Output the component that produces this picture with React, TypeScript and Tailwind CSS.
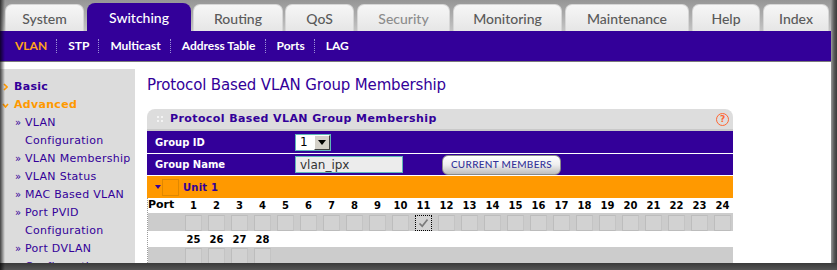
import React from 'react';

const tabs: { label: string; cls: string; active?: boolean; dim?: boolean }[] = [
  { label: 'System', cls: 'ml-[5px] w-[79px]' },
  { label: 'Switching', cls: 'ml-[3px] w-[104px]', active: true },
  { label: 'Routing', cls: 'ml-[2px] w-[90px]' },
  { label: 'QoS', cls: 'ml-[2px] w-[69px]' },
  { label: 'Security', cls: 'ml-[3px] w-[93px]', dim: true },
  { label: 'Monitoring', cls: 'ml-[3px] w-[109px]' },
  { label: 'Maintenance', cls: 'ml-[3px] w-[124px]' },
  { label: 'Help', cls: 'ml-[3px] w-[68px]' },
  { label: 'Index', cls: 'ml-[3px] w-[66px]' },
];

const subnav = ['VLAN', 'STP', 'Multicast', 'Address Table', 'Ports', 'LAG'];

const ports1 = Array.from({ length: 24 }, (_, i) => i + 1);
const ports2 = [25, 26, 27, 28];

function Checkbox({ checked }: { checked?: boolean }) {
  if (checked) {
    return (
      <div className="w-[17px] h-[16px] border border-dotted border-black bg-[#d3d3d3] flex items-center justify-center">
        <svg width="11" height="10" viewBox="0 0 11 10">
          <path d="M1.5 5.5 L4.2 8.2 L9.5 1.5" fill="none" stroke="#7a7a7a" strokeWidth="1.7" />
        </svg>
      </div>
    );
  }
  return <div className="w-[17px] h-[16px] border-l border-t border-[#bdbdbd] border-r border-r-[#c4c4c4] border-b border-b-[#bcbcbc] bg-[#d2d2d2]" />;
}

function SideItem({ children, first }: { children: React.ReactNode; first?: boolean }) {
  return (
    <div className="h-[18px] leading-[18px] flex items-center">
      <span className="w-[25px] pl-[15px] text-[10px]">{first ? '»' : ''}</span>
      <span>{children}</span>
    </div>
  );
}

export default function App() {
  return (
    <div className="relative w-[837px] h-[270px] overflow-hidden bg-white flex flex-col font-['DejaVu_Sans',sans-serif]">
      <div className="flex flex-1 min-h-0">
        <div className="flex-1 min-w-0 flex flex-col">
          {/* Tabs */}
          <div className="h-[31px] flex items-end bg-gradient-to-b from-[#969696] to-[#c4c4c4] font-['Lato',sans-serif] text-[14px] font-medium">
            {tabs.map((t) =>
              t.active ? (
                <div key={t.label} className={`${t.cls} h-[28px] rounded-t-[8px] bg-[#330099] text-white flex items-center justify-center pt-[1px]`}>
                  {t.label}
                </div>
              ) : (
                <div
                  key={t.label}
                  className={`${t.cls} h-[27px] rounded-t-[7px] bg-gradient-to-b from-[#f6f6f6] to-[#e6e6e6] border-t border-x border-[#d6d6d6] flex items-center justify-center ${t.dim ? 'text-[#8c8c8c]' : 'text-[#5a5a5a]'}`}
                >
                  {t.label}
                </div>
              )
            )}
          </div>
          {/* Sub nav */}
          <div className="h-[31px] bg-[#330099] border-b border-[#7a7a7a] flex items-center pl-[15px] font-['Lato',sans-serif] font-bold text-[12px] text-white">
            {subnav.map((s, i) => (
              <React.Fragment key={s}>
                {i > 0 && <span className="ml-[9px] mr-[11px] h-[14px] border-l border-dotted border-[#9a8fd6]" />}
                <span className={i === 0 ? 'text-[#ffa31a]' : ''}>{s}</span>
              </React.Fragment>
            ))}
          </div>
          {/* Body */}
          <div className="flex flex-1 min-h-0">
            <aside className="mt-[7px] w-[135px] shrink-0 bg-[#dcdcdc] pt-[9px] text-[11px] tracking-[0.3px] text-[#330099]">
              <div className="h-[18px] flex items-center">
                <span className="w-[14px] pl-[3px]">
                  <svg width="5" height="8" viewBox="0 0 5 8"><path d="M1 1 L4 4 L1 7" fill="none" stroke="#ff9900" strokeWidth="1.6" /></svg>
                </span>
                <span className="font-bold">Basic</span>
              </div>
              <div className="h-[18px] flex items-center">
                <span className="w-[14px] pl-[2px]">
                  <svg width="7" height="5" viewBox="0 0 7 5"><path d="M1 1 L3.5 4 L6 1" fill="none" stroke="#ff9900" strokeWidth="1.6" /></svg>
                </span>
                <span className="font-bold text-[#ff9900]">Advanced</span>
              </div>
              <SideItem first>VLAN</SideItem>
              <SideItem>Configuration</SideItem>
              <SideItem first>VLAN Membership</SideItem>
              <SideItem first>VLAN Status</SideItem>
              <SideItem first>MAC Based VLAN</SideItem>
              <SideItem first>Port PVID</SideItem>
              <SideItem>Configuration</SideItem>
              <SideItem first>Port DVLAN</SideItem>
              <SideItem>Configuration</SideItem>
            </aside>
            <main className="pl-[12px] pt-[13px] min-w-0">
              <h1 className="text-[15px] leading-[20px] tracking-[-0.15px] text-[#330099]">Protocol Based VLAN Group Membership</h1>
              <div className="mt-[14px] w-[586px] overflow-hidden">
                {/* header */}
                <div className="h-[20px] rounded-t-[8px] bg-[#dddddd] flex items-center pl-[10px] pr-[4px]">
                  <span className="grid grid-cols-2 gap-[2px] w-[6px] mr-[7px]">
                    <span className="w-[2px] h-[2px] bg-[#f4f4f4]" />
                    <span className="w-[2px] h-[2px] bg-[#f4f4f4]" />
                    <span className="w-[2px] h-[2px] bg-[#f4f4f4]" />
                    <span className="w-[2px] h-[2px] bg-[#f4f4f4]" />
                  </span>
                  <span className="font-bold text-[11px] tracking-[0.4px] text-[#330099] flex-1">Protocol Based VLAN Group Membership</span>
                  <span className="w-[13px] h-[13px] rounded-full border-[1.5px] border-[#ff6633] text-[#ff6633] text-[9px] font-bold flex items-center justify-center leading-none">?</span>
                </div>
                <div className="h-[2px] bg-[#c9c9c9]" />
                {/* Group ID */}
                <div className="h-[22px] bg-[#330099] flex items-center text-white font-bold text-[10px]">
                  <span className="w-[148px] pl-[8px]">Group ID</span>
                  <div className="w-[36px] h-[17px] border border-[#5fb8b8] bg-white flex items-center">
                    <span className="flex-1 pl-[4px] text-black font-normal text-[12px]">1</span>
                    <span className="w-[16px] h-[15px] bg-[#d4d0c8] border-t border-l border-white border-r border-r-[#404040] border-b border-b-[#404040] flex items-center justify-center">
                      <svg width="8" height="5" viewBox="0 0 8 5"><path d="M0 0 H8 L4 5 Z" fill="#000" /></svg>
                    </span>
                  </div>
                </div>
                <div className="h-[1px] bg-white" />
                {/* Group Name */}
                <div className="h-[21px] bg-[#330099] flex items-center text-white font-bold text-[10px]">
                  <span className="w-[148px] pl-[8px]">Group Name</span>
                  <div className="w-[108px] h-[17px] border border-[#5fb8b8] bg-[#ececec] flex items-center pl-[4px] text-[#333] font-normal text-[12px]">vlan_ipx</div>
                  <div className="ml-[39px] w-[119px] h-[20px] rounded-[6px] border border-[#8a8a8a] bg-gradient-to-b from-[#ffffff] via-[#eeeeee] to-[#bdbdbd] flex items-center justify-center font-['Lato',sans-serif] font-medium text-[10px] tracking-[0.3px] text-[#333399]">
                    CURRENT MEMBERS
                  </div>
                </div>
                <div className="h-[1px] bg-white" />
                {/* Unit row */}
                <div className="h-[22px] bg-[#ff9900] flex items-center">
                  <span className="w-[15px] pl-[8px]">
                    <svg width="6" height="4" viewBox="0 0 6 4"><path d="M0 0 H6 L3 4 Z" fill="#330099" /></svg>
                  </span>
                  <span className="w-[17px] h-[17px] border border-[#e08800] bg-[#ff9900]" />
                  <span className="ml-[4px] font-bold text-[10px] tracking-[0.2px] text-[#330099]">Unit 1</span>
                </div>
                {/* Ports */}
                <div className="border-l border-dotted border-[#9a9a9a]">
                  <div className="h-[15px] flex items-center bg-white text-black font-bold text-[10px]">
                    <span className="w-[37px] shrink-0 text-[11px]">Port</span>
                    {ports1.map((n) => (
                      <span key={n} className="w-[23px] shrink-0">
                        <span className="block w-[17px] text-center">{n}</span>
                      </span>
                    ))}
                  </div>
                  <div className="h-[18px] flex bg-[#cccccc] pt-[2px]">
                    <span className="w-[37px] shrink-0" />
                    {ports1.map((n) => (
                      <span key={n} className="w-[23px] shrink-0">
                        <Checkbox checked={n === 11} />
                      </span>
                    ))}
                  </div>
                  <div className="h-[16px] flex items-center bg-white text-black font-bold text-[10px]">
                    <span className="w-[37px] shrink-0" />
                    {ports2.map((n) => (
                      <span key={n} className="w-[23px] shrink-0">
                        <span className="block w-[17px] text-center">{n}</span>
                      </span>
                    ))}
                  </div>
                  <div className="h-[18px] flex bg-[#cccccc] pt-[1px]">
                    <span className="w-[37px] shrink-0" />
                    {ports2.map((n) => (
                      <span key={n} className="w-[23px] shrink-0">
                        <Checkbox />
                      </span>
                    ))}
                  </div>
                </div>
              </div>
            </main>
          </div>
        </div>
        <div className="w-[6px] shrink-0 bg-gradient-to-r from-[#9a9a9a] via-[#5a5a5a] to-[#3a3a3a]" />
      </div>
      <div className="h-[7px] shrink-0 bg-gradient-to-b from-[#3a3a3a] to-[#555555]" />
      <div className="absolute left-0 top-0 bottom-0 w-[5px] bg-gradient-to-r from-[rgba(0,0,0,0.7)] to-[rgba(0,0,0,0)]" />
    </div>
  );
}
